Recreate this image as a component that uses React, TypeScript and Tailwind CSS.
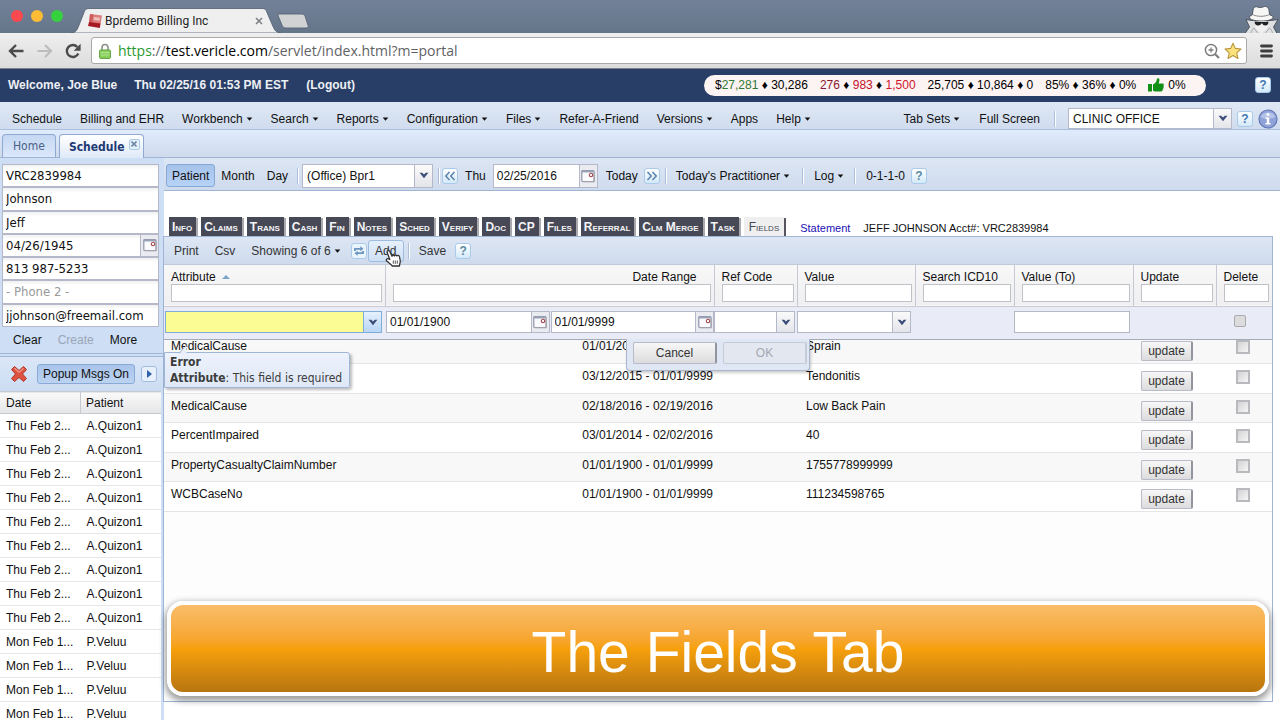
import { useId } from "react";
import type { ReactNode } from "react";
import { clsx } from "clsx";

const ARIAL = "font-['Liberation_Sans',Arial,sans-serif]";
const TAHOMA = "font-['DejaVu_Sans_Condensed','DejaVu_Sans',sans-serif]";

/* ---------- small building blocks ---------- */

function Caret() {
  return (
    <svg viewBox="0 0 8 5" className="h-[4px] w-[7px] shrink-0" aria-hidden="true">
      <path d="M0.5 0.5h7L4 4.6z" fill="#111" />
    </svg>
  );
}

function Separator() {
  return <span className="h-4 w-[2px] shrink-0 border-l border-[#a9bfdc] bg-white" />;
}

function HelpButton({ dim = false }: { dim?: boolean }) {
  return (
    <button
      type="button"
      aria-label="Help"
      className={clsx(
        "flex size-4 shrink-0 items-center justify-center rounded-[3px] border border-[#a9cbe9] bg-linear-to-b from-white to-[#d3e9f8] text-xs leading-none font-bold",
        dim ? "text-[#5c8ba0]" : "text-[#4479b5]",
      )}
    >
      ?
    </button>
  );
}

function MenuButton({ children, caret = false }: { children: ReactNode; caret?: boolean }) {
  return (
    <button type="button" className="flex items-center gap-[3px] whitespace-nowrap">
      {children}
      {caret && <Caret />}
    </button>
  );
}

function CalendarButton() {
  return (
    <button
      type="button"
      aria-label="Pick a date"
      className="flex w-[18px] shrink-0 items-center justify-center border border-l-0 border-[#b5b8c8] bg-[#e9ebf0]"
    >
      <svg viewBox="0 0 14 14" className="size-[14px]" aria-hidden="true">
        <rect x="0.8" y="1.5" width="12.2" height="11" rx="1" fill="#fbfbfd" stroke="#8f96a8" strokeWidth="1.2" />
        <path d="M1 2.5h12" stroke="#9aa3b8" strokeWidth="2" />
        <path d="M2 12.8h11.3V4" stroke="#a9a5b0" strokeWidth="1" fill="none" />
        <circle cx="10" cy="6" r="1.7" fill="#fff" stroke="#a3474c" strokeWidth="1.1" />
      </svg>
    </button>
  );
}

function Combo({
  label,
  value = "",
  className,
  tone = "plain",
}: {
  label: string;
  value?: string;
  className?: string;
  tone?: "plain" | "active";
}) {
  return (
    <div className={clsx("relative flex", className)}>
      <select
        aria-label={label}
        defaultValue={value}
        className={clsx(
          "h-full w-full min-w-0 appearance-none rounded-none border pr-5 pl-1 outline-none",
          tone === "active" ? "border-[#7eadd9] bg-[#fbfd94]" : "border-[#b5b8c8] bg-white",
        )}
      >
        <option value={value}>{value}</option>
      </select>
      <span
        className={clsx(
          "pointer-events-none absolute inset-y-0 right-0 flex w-[19px] items-center justify-center border",
          tone === "active"
            ? "border-[#7eadd9] bg-linear-to-b from-[#e5f1fd] to-[#b9d6f5]"
            : "border-[#b5b8c8] bg-linear-to-b from-[#fafafa] to-[#e4e5ea]",
        )}
      >
        <svg viewBox="0 0 10 7" className="h-[7px] w-[10px]" aria-hidden="true">
          <path d="M0.6 0.8h2.6L5 2.6 6.8 0.8h2.6L5 6.2z" fill="#3a4d78" />
        </svg>
      </span>
    </div>
  );
}

function DateField({ label, value, className }: { label: string; value: string; className?: string }) {
  return (
    <div className={clsx("flex min-w-0", className)}>
      <input
        aria-label={label}
        defaultValue={value}
        className="min-w-0 flex-1 border border-[#b5b8c8] bg-white px-[3px] outline-none"
      />
      <CalendarButton />
    </div>
  );
}

function Chevrons({ back = false }: { back?: boolean }) {
  return (
    <button
      type="button"
      aria-label={back ? "Previous day" : "Next day"}
      className="flex size-4 shrink-0 items-center justify-center rounded-[3px] border border-[#a9cbe9] bg-linear-to-b from-white to-[#d3e9f8]"
    >
      <svg viewBox="0 0 12 10" className="h-[10px] w-3" fill="none" stroke="#5f86ad" strokeWidth="1.6" aria-hidden="true">
        {back ? <path d="M5.5 1L1.8 5l3.7 4M10.5 1L6.8 5l3.7 4" /> : <path d="M1.5 1l3.7 4-3.7 4M6.5 1l3.7 4-3.7 4" />}
      </svg>
    </button>
  );
}

/* ---------- browser window ---------- */

function Incognito() {
  return (
    <svg viewBox="0 0 36 28" className="mr-px h-7 w-9" aria-hidden="true">
      <g stroke="#454c56" strokeWidth="0.900" strokeLinejoin="round">
        <path d="M9 15.500L3 14.500l3.500 7.500L2 28.500h32L30.500 22 35 14.500l-6.500 1z" fill="#dfe0e1" />
        <path d="M10 5.500C10.500 2 12.500 1.300 14.500 2c2 .7 4 .6 6-.2 2.800-1 5 .2 5.500 3.700l.8 4.500c2 .4 3.200 1.200 3.200 2.300 0 2.300-5 3.700-11.700 3.700S6.500 14.600 6.500 12.300c0-1 1-1.800 2.700-2.300z" fill="#f6f6f5" />
      </g>
      <path d="M9.500 9.500c4.500 2.400 12 2.400 17 0" stroke="#85898e" strokeWidth="1" fill="none" />
      <path d="M11 16.500h15l-2 7.500-5.500 4.500L13 24z" fill="#f0f0f0" />
      <path d="M11.500 16.500c2.300.3 4.500.5 6.500.5h1.500c2 0 4-.2 6-.6 0 2.800-1.200 4-3.100 4-1.700 0-2.700-1-3.100-2h-1c-.4 1-1.500 2-3.300 2-2 0-3.500-1.200-3.500-3.900z" fill="#1d2126" />
      <path d="M8 28c.5-2.500 1.500-3.500 3-5l4 5.500M29.500 28c-.5-2.500-1.500-3.500-3-5l-4.500 5.500" stroke="#a2a5a8" strokeWidth="0.900" fill="none" />
    </svg>
  );
}

function TitleBar() {
  return (
    <header className="flex h-[33px] shrink-0 items-end justify-between bg-linear-to-b from-[#728199] to-[#667689] font-[Roboto,sans-serif]">
      <div className="flex items-end">
        <div className="flex gap-2 pb-[11px] pl-[11px]">
          <button type="button" aria-label="Close window" className="size-3 rounded-full bg-[#fc4950]" />
          <button type="button" aria-label="Minimize window" className="size-3 rounded-full bg-[#fdbc35]" />
          <button type="button" aria-label="Zoom window" className="size-3 rounded-full bg-[#35d13f]" />
        </div>
        <div className="relative ml-2 flex h-[25px] w-[210px] items-center">
          <svg viewBox="0 0 210 25" preserveAspectRatio="none" className="absolute inset-0 h-full w-full" aria-hidden="true">
            <path d="M0 25C5 24.500 6 22 7.500 18.500L13 4.500C14 1.500 15 .5 18 .5h173c3 0 4 1 5 4l6 14c1.500 3.500 3 6 8 6.500z" fill="#efeff0" stroke="#505d6e" strokeWidth="0.800" />
          </svg>
          <svg viewBox="0 0 16 16" className="relative ml-4 size-4" aria-hidden="true">
            <path d="M3 1l12 1.500-1.500 9L2 10z" fill="#dc7d7b" />
            <path d="M3 1l3.500.4L5 10.400 2 10z" fill="#cf5c5e" />
            <path d="M7 4l6 .7-.5 3-6-.6z" fill="#efc1bd" />
            <path d="M2 9l11.500 1.500-.7 4.500L1 13z" fill="#a51a22" />
          </svg>
          <span className="relative ml-[2px] flex-1 text-xs whitespace-nowrap text-[#222]">Bprdemo Billing Inc</span>
          <button type="button" aria-label="Close tab" className="relative mr-[18px]">
            <svg viewBox="0 0 8 8" className="size-2" stroke="#7b7f84" strokeWidth="1.500" aria-hidden="true">
              <path d="M1 1l6 6M7 1L1 7" />
            </svg>
          </button>
        </div>
        <button type="button" aria-label="New tab" className="-ml-[4px] pb-1">
          <svg viewBox="0 0 32 16" className="h-4 w-8" aria-hidden="true">
            <path d="M2.500 1h22c2 0 3 .8 3.600 2.300l3 9.200c.4 1.500-.2 2.500-2 2.500H9c-2 0-3-.8-3.800-2.500L1.200 3C.8 1.700 1.300 1 2.500 1z" fill="#d0d2d3" stroke="#566375" strokeWidth="0.900" />
          </svg>
        </button>
      </div>
      <Incognito />
    </header>
  );
}

function AddressBar() {
  return (
    <div className="flex h-9 shrink-0 items-center border-b border-[#7d8186] bg-linear-to-b from-[#efefef] to-[#dcdcdc] pr-[7px] pl-2">
      <div className="flex w-[83px] items-center gap-[13px]">
        <button type="button" aria-label="Back">
          <svg viewBox="0 0 16 14" className="h-[14px] w-4" fill="none" stroke="#4b4b4b" strokeWidth="2.400" aria-hidden="true">
            <path d="M15.500 7H2.500M8 1L2 7l6 6" />
          </svg>
        </button>
        <button type="button" aria-label="Forward">
          <svg viewBox="0 0 16 14" className="h-[14px] w-4" fill="none" stroke="#bdbdbd" strokeWidth="2.200" aria-hidden="true">
            <path d="M.5 7h13M8 1l6 6-6 6" />
          </svg>
        </button>
        <button type="button" aria-label="Reload" className="-ml-px">
          <svg viewBox="0 0 16 16" className="size-4" aria-hidden="true">
            <path d="M13.300 10.500A6 6 0 1 1 12.300 4" fill="none" stroke="#4b4b4b" strokeWidth="2.400" />
            <path d="M15.600.8v6.900H8.700z" fill="#4b4b4b" />
          </svg>
        </button>
      </div>
      <div className="flex h-[27px] flex-1 items-center rounded-[3px] border border-[#a9a9a9] bg-white px-[7px]">
        <svg viewBox="0 0 12 16" className="h-4 w-3" aria-hidden="true">
          <path d="M3 8V4.500a3 3 0 0 1 6 0V8" fill="none" stroke="#8b9288" strokeWidth="1.600" />
          <rect x="0.600" y="7" width="10.800" height="8.400" rx="1" fill="#8bd05f" stroke="#5aa23a" />
          <path d="M1.500 9.500h9M1.500 12h9" stroke="#b3e592" strokeWidth="0.900" />
        </svg>
        <a href="#address" className="ml-[7px] flex-1 font-['Open_Sans',sans-serif] text-sm whitespace-nowrap text-[#5f6265]">
          <span className="text-[#2a9a2f]">https</span>://<span className="text-black">test.vericle.com</span>/servlet/index.html?m=portal
        </a>
        <button type="button" aria-label="Zoom level" className="mr-1">
          <svg viewBox="0 0 16 16" className="size-4" fill="none" stroke="#7d7d7d" aria-hidden="true">
            <circle cx="7" cy="7" r="5.600" strokeWidth="1.500" />
            <path d="M11 11l4 4" strokeWidth="2.200" />
            <path d="M7 4.500v5M4.500 7h5" strokeWidth="1.300" />
          </svg>
        </button>
        <button type="button" aria-label="Bookmark this page" className="-mr-[3px]">
          <svg viewBox="0 0 18 18" className="size-[18px]" aria-hidden="true">
            <path d="M9 1.200l2.300 5.200 5.700.6-4.300 3.800 1.300 5.700L9 13.500l-5 3 1.300-5.700L1 7l5.700-.6z" fill="#fbe27c" stroke="#b9953e" strokeWidth="1.100" strokeLinejoin="round" />
          </svg>
        </button>
      </div>
      <button type="button" aria-label="Browser menu" className="ml-[13px]">
        <svg viewBox="0 0 13 14" className="h-[14px] w-[13px]" stroke="#3d3d3d" strokeWidth="2.800" strokeLinecap="round" aria-hidden="true">
          <path d="M1.500 2h10M1.500 7h10M1.500 12h10" />
        </svg>
      </button>
    </div>
  );
}

/* ---------- application header ---------- */

function StatusBar() {
  return (
    <div className="flex h-[33px] shrink-0 items-center bg-[#283e66] pr-[9px] pb-px pl-2 text-xs font-bold text-[#eef0f4]">
      <span>Welcome, Joe Blue</span>
      <span className="ml-[17px]">Thu 02/25/16 01:53 PM EST</span>
      <a href="#logout" className="ml-[18px]">(Logout)</a>
      <div className="ml-auto flex h-[21px] w-[502px] items-center gap-3 rounded-full bg-[#fcf3f3] px-[11px] font-normal whitespace-nowrap text-black">
        <span>
          $<span className="text-[#2f7a35]">27,281</span> ♦ 30,286
        </span>
        <span>
          <span className="text-[#8c1631]">276</span> ♦ <span className="text-[#c4122b]">983</span> ♦{" "}
          <span className="text-[#d0142c]">1,500</span>
        </span>
        <span>25,705 ♦ 10,864 ♦ 0</span>
        <span>85% ♦ 36% ♦ 0%</span>
        <span className="flex items-center gap-1">
          <svg viewBox="0 0 16 14" className="h-[14px] w-4" fill="#129016" aria-hidden="true">
            <path d="M0 6h4v7.500H0z" />
            <path d="M5 6.500C7.500 5.500 8.500 3.500 9 .8c.2-1 2.200-.8 2.400.8.200 1.300-.2 2.600-.8 3.900h3.900c1.500 0 1.700 1.600.8 2.200.8.600.7 1.800-.2 2.200.5.700.2 1.700-.7 1.900.3 1-.2 1.700-1.200 1.700H8c-1.500 0-2-.8-3-.8z" />
          </svg>
          0%
        </span>
      </div>
      <div className="ml-[49px] flex">
        <HelpButton />
      </div>
    </div>
  );
}

function MenuBar() {
  return (
    <nav className="flex h-7 shrink-0 items-center gap-[18px] border-b border-[#a9bfdc] bg-linear-to-b from-[#dfe8f5] to-[#d0dcee] pt-[6px] pr-[2px] pl-3 text-xs text-[#111]">
      <MenuButton>Schedule</MenuButton>
      <MenuButton>Billing and EHR</MenuButton>
      <MenuButton caret>Workbench</MenuButton>
      <MenuButton caret>Search</MenuButton>
      <MenuButton caret>Reports</MenuButton>
      <MenuButton caret>Configuration</MenuButton>
      <MenuButton caret>Files</MenuButton>
      <MenuButton>Refer-A-Friend</MenuButton>
      <MenuButton caret>Versions</MenuButton>
      <MenuButton>Apps</MenuButton>
      <MenuButton caret>Help</MenuButton>
      <div className="ml-auto flex items-center">
        <div className="mr-[14px] flex gap-[19px]">
          <MenuButton caret>Tab Sets</MenuButton>
          <MenuButton>Full Screen</MenuButton>
        </div>
        <Separator />
        <Combo label="Office" value="CLINIC OFFICE" className="ml-3 h-[21px] w-[164px]" />
        <div className="ml-[5px] flex">
          <HelpButton />
        </div>
        <button type="button" aria-label="Information" className="ml-[5px]">
          <svg viewBox="0 0 20 20" className="size-5" aria-hidden="true">
            <circle cx="10" cy="10" r="9" fill="#8fa3d8" stroke="#6478b5" strokeWidth="1.200" />
            <path d="M2.500 8a8 7 0 0 1 15 0c-4 2-11 2-15 0z" fill="#b5c3e8" />
            <circle cx="10" cy="5.500" r="1.500" fill="#fff" />
            <path d="M7.500 8.500h3.700v5.500h1.300v1.500h-5V14h1.300v-4H7.500z" fill="#fff" />
          </svg>
        </button>
      </div>
    </nav>
  );
}

function PageTabs() {
  return (
    <div className={clsx("flex h-7 shrink-0 items-end gap-[3px] border-b border-[#a0b5d6] bg-linear-to-b from-[#e0ebfc] to-[#cfdbec] pl-[2px] text-xs", TAHOMA)}>
      <button type="button" className="h-[23px] rounded-t-[4px] border border-b-0 border-[#8fa9d0] bg-linear-to-b from-[#c5d8f3] to-[#dbe7fa] px-[10px] text-[#4a6288]">
        Home
      </button>
      <div className="-mb-px flex h-6 items-center gap-1 rounded-t-[4px] border border-b-0 border-[#8fa9d0] bg-linear-to-b from-white to-[#dfe9f8] pr-[3px] pl-[9px]">
        <button type="button" className="font-bold text-[#1d3a72]">Schedule</button>
        <button type="button" aria-label="Close Schedule" className="mb-[5px] flex size-[11px] items-center justify-center rounded-[2px] border border-[#a9cbe9] bg-[#e4f0fa]">
          <svg viewBox="0 0 6 6" className="size-[6px]" stroke="#6f8aa5" strokeWidth="1.600" aria-hidden="true">
            <path d="M0.500 0.500l5 5M5.500 0.500l-5 5" />
          </svg>
        </button>
      </div>
    </div>
  );
}

/* ---------- patient sidebar ---------- */

const visits = [
  ...Array.from({ length: 9 }, () => ({ date: "Thu Feb 2...", patient: "A.Quizon1" })),
  ...Array.from({ length: 4 }, () => ({ date: "Mon Feb 1...", patient: "P.Veluu" })),
];

const patientFields = [
  { label: "Account", value: "VRC2839984" },
  { label: "Last name", value: "Johnson" },
  { label: "First name", value: "Jeff" },
  { label: "Date of birth", value: "04/26/1945", calendar: true },
  { label: "Phone", value: "813 987-5233" },
  { label: "Second phone", value: "", placeholder: "- Phone 2 -" },
  { label: "Email", value: "jjohnson@freemail.com" },
];

function Sidebar() {
  return (
    <aside className="flex w-[164px] shrink-0 flex-col overflow-hidden bg-[#cddef5] text-xs text-[#111]">
      <div className={clsx("mt-[6px] flex h-[163px] shrink-0 flex-col pr-[5px] pl-[2px] text-[13px]", TAHOMA)}>
        {patientFields.map((f) => (
          <div key={f.label} className="flex min-h-0 flex-1">
            <input
              aria-label={f.label}
              defaultValue={f.value}
              placeholder={f.placeholder}
              className="min-w-0 flex-1 border border-[#b5b8c8] bg-linear-to-b from-[#f0f0f0] via-white via-20% to-white px-[3px] outline-none placeholder:text-[#999]"
            />
            {f.calendar && <CalendarButton />}
          </div>
        ))}
      </div>
      <div className="flex h-[27px] shrink-0 items-center gap-4 border-b border-[#a0b5d6] pl-[13px]">
        <button type="button">Clear</button>
        <button type="button" disabled className="text-[#9aa6b8]">Create</button>
        <button type="button">More</button>
      </div>
      <div className="mt-[2px] flex h-[35px] shrink-0 items-center border-t border-[#a0b5d6] bg-linear-to-b from-[#dbe7f8] to-[#cbdcf2] pl-[10px]">
        <button type="button" aria-label="Remove">
          <svg viewBox="0 0 18 18" className="size-[18px]" aria-hidden="true">
            <path d="M4.500 1.500L9 5.500l4.500-4 3 3L12.500 9l4 4.500-3 3L9 12.500l-4.500 4-3-3 4-4.500-4-4.500z" fill="#dd5140" stroke="#b23327" strokeLinejoin="round" />
            <path d="M4.500 3.200L9 7.200l4.500-4" stroke="#f19a8c" strokeWidth="1.200" fill="none" />
          </svg>
        </button>
        <button type="button" className="ml-[9px] h-5 w-[98px] rounded-[3px] border border-[#8aaad6] bg-linear-to-b from-[#a9c5ea] to-[#bcd3f1] whitespace-nowrap">
          Popup Msgs On
        </button>
        <button type="button" aria-label="Next message" className="ml-[6px] flex size-4 items-center justify-center rounded-[3px] border border-[#a3bde0] bg-[#e7f0fb]">
          <svg viewBox="0 0 5 8" className="h-2 w-[5px]" fill="#2f62a8" aria-hidden="true">
            <path d="M0 0l5 4-5 4z" />
          </svg>
        </button>
      </div>
      <table className="w-[161px] shrink-0 table-fixed border-collapse bg-white text-left">
        <thead>
          <tr className="h-[22px] border-y border-[#c5c9d0] bg-linear-to-b from-[#f9f9f9] to-[#e5e6e8]">
            <th scope="col" className="border-r border-[#c5c9d0] pl-[6px] font-normal">Date</th>
            <th scope="col" className="pl-[5px] font-normal">Patient</th>
          </tr>
        </thead>
        <tbody>
          {visits.map((v, i) => (
            <tr key={i} className="h-6 border-b border-[#e6e7ea]">
              <td className="pl-[6px] whitespace-nowrap">{v.date}</td>
              <td className="pl-[6px]">{v.patient}</td>
            </tr>
          ))}
        </tbody>
      </table>
    </aside>
  );
}

/* ---------- schedule work area ---------- */

function ScheduleToolbar() {
  return (
    <div className="flex h-[33px] shrink-0 items-center border-b border-[#a0b5d6] bg-linear-to-b from-[#dce6f4] to-[#cfdbed] pt-[3px] pl-[2px] text-xs whitespace-nowrap text-[#111]">
      <button type="button" className="h-[23px] rounded-[3px] border border-[#85a8d6] bg-linear-to-b from-[#a5c2ea] to-[#b7d2f7] px-[5px]">
        Patient
      </button>
      <button type="button" className="ml-[6px]">Month</button>
      <button type="button" className="mr-[9px] ml-3">Day</button>
      <Separator />
      <Combo label="Resource" value="(Office) Bpr1" className="mx-[3px] mr-[5px] h-6 w-[131px]" />
      <Separator />
      <div className="mr-[7px] ml-[2px] flex"><Chevrons back /></div>
      <label htmlFor="schedule-day">Thu</label>
      <div className="mr-2 ml-[7px] flex h-6 w-[105px]">
        <input id="schedule-day" defaultValue="02/25/2016" className="min-w-0 flex-1 border border-[#b5b8c8] bg-white px-[3px] outline-none" />
        <CalendarButton />
      </div>
      <button type="button" className="mr-[6px]">Today</button>
      <Chevrons />
      <div className="mr-[9px] ml-[5px] flex"><Separator /></div>
      <MenuButton caret>Today&apos;s Practitioner</MenuButton>
      <div className="mr-[10px] ml-3 flex"><Separator /></div>
      <MenuButton caret>Log</MenuButton>
      <div className="mx-[10px] flex"><Separator /></div>
      <span className="mr-[6px]">0-1-1-0</span>
      <HelpButton dim />
    </div>
  );
}

const sections = ["Info", "Claims", "Trans", "Cash", "Fin", "Notes", "Sched", "Verify", "Doc", "CP", "Files", "Referral", "Clm Merge", "Task", "Fields"];

function SectionTabs() {
  return (
    <div className="flex h-[45px] shrink-0 items-end gap-[5px] pl-[5px] whitespace-nowrap">
      {sections.map((name) => (
        <a
          key={name}
          href={"#" + name.toLowerCase().replace(" ", "-")}
          className={clsx(
            "h-[19px] text-xs leading-[21px] [font-variant:small-caps]",
            name === "Fields"
              ? "bg-[#efeff0] px-[5px] text-[#444a58] shadow-[2px_1px_0_#55565f]"
              : "bg-[#474957] pr-1 pl-[3px] font-bold text-[#f4f4f6] shadow-[2px_1px_0_#a9a9ae]",
          )}
        >
          {name}
        </a>
      ))}
      <a href="#statement" className="ml-[11px] text-[11px] text-[#1c10b4]">Statement</a>
      <span className="ml-2 text-[11px] text-[#111]">JEFF JOHNSON Acct#: VRC2839984</span>
    </div>
  );
}

function HandCursor() {
  return (
    <svg viewBox="0 0 16 20" className="pointer-events-none absolute top-[9px] left-[17px] z-30 h-5 w-4" aria-hidden="true">
      <path
        d="M4.800 10.500L2.200 3.600c-.8-2 1.800-2.800 2.600-1L7 7.300c0-1.300 2-1.600 2.500-.3.200-1.200 2-1.300 2.500 0 .5-1 2.200-.7 2.500.8l.7 3.500c.4 2-.7 3.200-.7 5.700H7.300c-.3-1.300-3.300-2.800-5.500-5-1.300-1.400.3-3 1.700-2z"
        fill="#fff"
        stroke="#333"
        strokeWidth="1.300"
        strokeLinejoin="round"
      />
      <path d="M8.300 11.500v3.300M10.300 11.500v3.300M12.300 11.500v3.300" stroke="#444" strokeWidth="0.900" />
    </svg>
  );
}

function GridToolbar() {
  return (
    <div className="flex h-[27px] items-center bg-linear-to-b from-[#dce6f4] to-[#cfdbed] pl-[10px] text-xs whitespace-nowrap text-[#333]">
      <button type="button">Print</button>
      <button type="button" className="mx-4">Csv</button>
      <MenuButton caret>Showing 6 of 6</MenuButton>
      <button type="button" aria-label="Refresh" className="ml-[10px] flex size-4 items-center justify-center rounded-[3px] border border-[#a9cbe9] bg-[#eaf4fc]">
        <svg viewBox="0 0 12 12" className="size-3" fill="none" stroke="#6a96bf" strokeWidth="1.800" aria-hidden="true">
          <path d="M2 6V3.800h6M10 6v2.200H4" />
          <path d="M7.300 1.200L10.500 3.800 7.300 6.300zM4.700 5.700L1.500 8.200l3.200 2.600z" fill="#6a96bf" stroke="none" />
        </svg>
      </button>
      <div className="relative mr-[4px] ml-px">
        <button type="button" className="h-[22px] w-9 rounded-[3px] border border-[#9dbde0] bg-linear-to-b from-[#e6f0fb] to-[#cfe0f5]">
          Add
        </button>
        <HandCursor />
      </div>
      <Separator />
      <button type="button" className="mr-[9px] ml-[9px]">Save</button>
      <HelpButton dim />
    </div>
  );
}

const columns = [
  { name: "Attribute", width: "w-[221px]" },
  { name: "Date Range", width: "" },
  { name: "Ref Code", width: "w-[83px]" },
  { name: "Value", width: "w-[118px]" },
  { name: "Search ICD10", width: "w-[99px]" },
  { name: "Value (To)", width: "w-[119px]" },
  { name: "Update", width: "w-[83px]" },
  { name: "Delete", width: "w-[56px]" },
];

const rows = [
  { attribute: "MedicalCause", range: "01/01/2015 - 01/01/9999", value: "Sprain" },
  { attribute: "MedicalCause", range: "03/12/2015 - 01/01/9999", value: "Tendonitis" },
  { attribute: "MedicalCause", range: "02/18/2016 - 02/19/2016", value: "Low Back Pain" },
  { attribute: "PercentImpaired", range: "03/01/2014 - 02/02/2016", value: "40" },
  { attribute: "PropertyCasualtyClaimNumber", range: "01/01/1900 - 01/01/9999", value: "1755778999999" },
  { attribute: "WCBCaseNo", range: "01/01/1900 - 01/01/9999", value: "111234598765" },
];

function ColumnHeader({ name }: { name: string }) {
  const id = useId();
  return (
    <th scope="col" className="border-r border-[#c5c9d3] pt-1 pr-[3px] pl-[7px] align-top font-normal last:border-r-0">
      <label htmlFor={id} className={clsx("flex h-[15px] items-center gap-[6px] whitespace-nowrap", name === "Date Range" && "justify-end pr-[14px]")}>
        {name}
        {name === "Attribute" && (
          <svg viewBox="0 0 8 4" className="h-1 w-2" aria-hidden="true">
            <path d="M0 4l4-4 4 4z" fill="#7ba6cb" />
          </svg>
        )}
      </label>
      <input id={id} className="block h-[18px] w-full border border-[#c0c2c8] bg-white px-1 outline-none" />
    </th>
  );
}

const buttonLook =
  "rounded-[2px] border border-r-2 border-[#b9bcc6] border-r-[#92949e] bg-linear-to-b from-[#f7f7f7] to-[#dcdcde] text-[#333]";

function RowEditor() {
  return (
    <form className="absolute inset-x-0 top-[42px] z-10 grid h-[33px] grid-cols-[221px_minmax(0,1fr)_83px_118px_99px_119px_83px_56px] items-start border-b border-[#a3aab8] bg-[#e9ecf7] pt-1">
      <Combo label="New attribute" tone="active" className="mr-[3px] ml-px h-[22px]" />
      <div className="flex h-[22px] gap-px pl-px">
        <DateField label="Start date" value="01/01/1900" className="flex-1" />
        <DateField label="End date" value="01/01/9999" className="flex-1" />
      </div>
      <Combo label="New ref code" className="mr-[2px] h-[22px]" />
      <Combo label="New value" className="mr-1 h-[22px]" />
      <span />
      <input aria-label="New value to" className="mr-[3px] h-[22px] border border-[#b5b8c8] bg-white px-1 outline-none" />
      <span />
      <input
        type="checkbox"
        aria-label="Delete new row"
        className="mt-1 mr-2 size-3 appearance-none justify-self-center rounded-[2px] border border-[#a8a9ad] bg-[#dcdcde]"
      />
      <div className="absolute top-8 left-1/2 flex h-8 w-[184px] -translate-x-1/2 justify-end gap-[6px] rounded-b-[4px] border border-t-0 border-[#a9b6cc] bg-[#dfe7f4] pt-[3px] pr-[2px] shadow-[1px_2px_3px_#00000033]">
        <button type="button" className={clsx("h-[22px] w-[84px]", buttonLook)}>Cancel</button>
        <button type="button" disabled className="h-[22px] w-[84px] rounded-[2px] border border-r-2 border-[#c5cbd8] bg-[#e2e7f0] text-[#a4a8b0]">OK</button>
      </div>
      <div
        role="alert"
        className={clsx(
          "absolute top-[45px] left-0 h-9 w-[186px] rounded-r-[3px] border border-[#9fb6d6] bg-linear-to-b from-[#edf2fc] to-[#dfe8f7] pl-[5px] text-xs leading-4 whitespace-nowrap text-[#3c3c3c] shadow-[2px_2px_3px_#00000044]",
          TAHOMA,
        )}
      >
        <svg viewBox="0 0 10 9" className="absolute -top-[8px] left-[13px] h-[9px] w-[10px]" aria-hidden="true">
          <path d="M1 9l7.500-9v9z" fill="#e9eff9" />
          <path d="M1 8.500l5-6" stroke="#a6b3c8" />
        </svg>
        <p className="pt-px font-bold">Error</p>
        <p>
          <b>Attribute</b>: This field is required
        </p>
      </div>
    </form>
  );
}

function FieldsGrid() {
  return (
    <div className="relative border-t border-[#c0c9d8] text-xs text-[#111]">
      <table className="w-full table-fixed border-collapse text-left">
        <colgroup>
          {columns.map((c) => (
            <col key={c.name} className={c.width} />
          ))}
        </colgroup>
        <thead>
          <tr className="h-[42px] border-b-2 border-[#c9cbd3] bg-linear-to-b from-[#f8f8f8] to-[#efeff1]">
            {columns.map((c) => (
              <ColumnHeader key={c.name} name={c.name} />
            ))}
          </tr>
        </thead>
        <tbody>
          <tr className="h-[27px] bg-[#e9ecf7]">
            <td colSpan={8} />
          </tr>
          {rows.map((r, i) => (
            <tr
              key={i}
              className={clsx("border-b border-[#e3e5e8] align-top leading-4", i % 2 === 0 ? "h-[29px] bg-[#f8f8f8]" : "h-[30px] bg-white")}
            >
              <td className="pt-1 pl-[7px]">{r.attribute}</td>
              <td className="pt-1 pr-px text-right">{r.range}</td>
              <td />
              <td className="pt-1 pl-[9px]">{r.value}</td>
              <td />
              <td />
              <td className="pt-[7px] pl-2">
                <button type="button" className={clsx("block h-5 w-[52px]", buttonLook)}>update</button>
              </td>
              <td className="pt-[6px] pl-5">
                <input
                  type="checkbox"
                  aria-label={"Delete " + r.attribute}
                  className="block size-[14px] appearance-none border-2 border-[#b9babe] bg-linear-to-br from-[#d3d3d5] to-[#f6f6f6]"
                />
              </td>
            </tr>
          ))}
        </tbody>
      </table>
      <RowEditor />
    </div>
  );
}

export default function App() {
  return (
    <div className={clsx("relative flex h-screen flex-col overflow-hidden bg-white", ARIAL)}>
      <TitleBar />
      <AddressBar />
      <StatusBar />
      <MenuBar />
      <PageTabs />
      <div className="flex min-h-0 flex-1">
        <Sidebar />
        <main className="flex min-w-0 flex-1 flex-col">
          <ScheduleToolbar />
          <SectionTabs />
          <section className="mr-[7px] mb-[18px] -ml-px flex-1 border border-[#a0b5d6] bg-[#fdfdfd]">
            <GridToolbar />
            <FieldsGrid />
          </section>
        </main>
      </div>
      <h1 className="absolute right-[11px] bottom-6 left-[167px] z-20 flex h-[95px] items-center justify-center rounded-2xl border-4 border-white bg-linear-to-b from-[#f9bd68] via-[#f6a00c] to-[#b8750f] pt-2 text-[57px] text-white shadow-[0_3px_6px_2px_#0000005e]">
        The Fields Tab
      </h1>
    </div>
  );
}
